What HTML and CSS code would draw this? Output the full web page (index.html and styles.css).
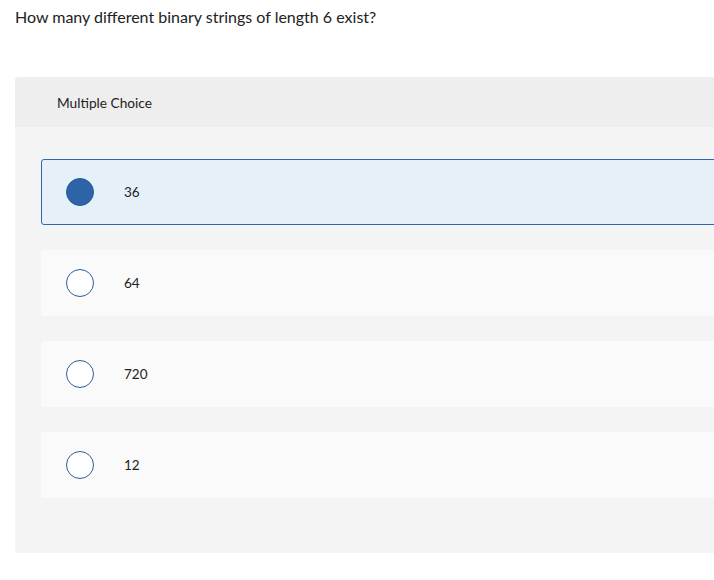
FILE: index.html
```html
<!DOCTYPE html>
<html>
<head>
<meta charset="utf-8">
<link rel="stylesheet" href="styles.css">
</head>
<body>
<p class="question">How many different binary strings of length 6 exist?</p>
<div class="panel">
  <div class="panel-header">Multiple Choice</div>
  <div class="panel-body">
    <div class="option selected"><span class="radio"></span><span class="label">36</span></div>
    <div class="option"><span class="radio"></span><span class="label">64</span></div>
    <div class="option"><span class="radio"></span><span class="label">720</span></div>
    <div class="option"><span class="radio"></span><span class="label">12</span></div>
  </div>
</div>
</body>
</html>
```
FILE: styles.css
```css
html, body {
  margin: 0;
  padding: 0;
  background: #ffffff;
  overflow: hidden;
}
body {
  font-family: Lato, "Open Sans", Arial, sans-serif;
  color: #222222;
}
.question {
  margin: 0;
  padding: 7px 0 0 15px;
  font-size: 16px;
  line-height: 20px;
  height: 70px;
}
.panel {
  margin-left: 15px;
  border-radius: 3px 0 0 3px;
  overflow: hidden;
}
.panel-header {
  height: 50px;
  background: #eeeeee;
  padding-left: 42px;
  display: flex;
  align-items: center;
  font-size: 13.7px;
}
.panel-body {
  background: #f4f4f4;
  padding: 32px 0 55px 26px;
  display: flex;
  flex-direction: column;
  gap: 25px;
}
.option {
  height: 66px;
  box-sizing: border-box;
  background: #fafafa;
  border-radius: 3px;
  margin-right: -10px;
  display: flex;
  align-items: center;
  padding-left: 25px;
  font-size: 13.5px;
}
.option.selected {
  background: #e6f0f9;
  border: 1px solid #2f66aa;
  padding-left: 24px;
}
.radio {
  width: 28px;
  height: 28px;
  box-sizing: border-box;
  border-radius: 50%;
  border: 1.5px solid #2c5d96;
  background: #ffffff;
  flex: none;
}
.selected .radio {
  background: #2d64a8;
  border: 1px solid #27579a;
}
.label {
  margin-left: 30px;
}
```
